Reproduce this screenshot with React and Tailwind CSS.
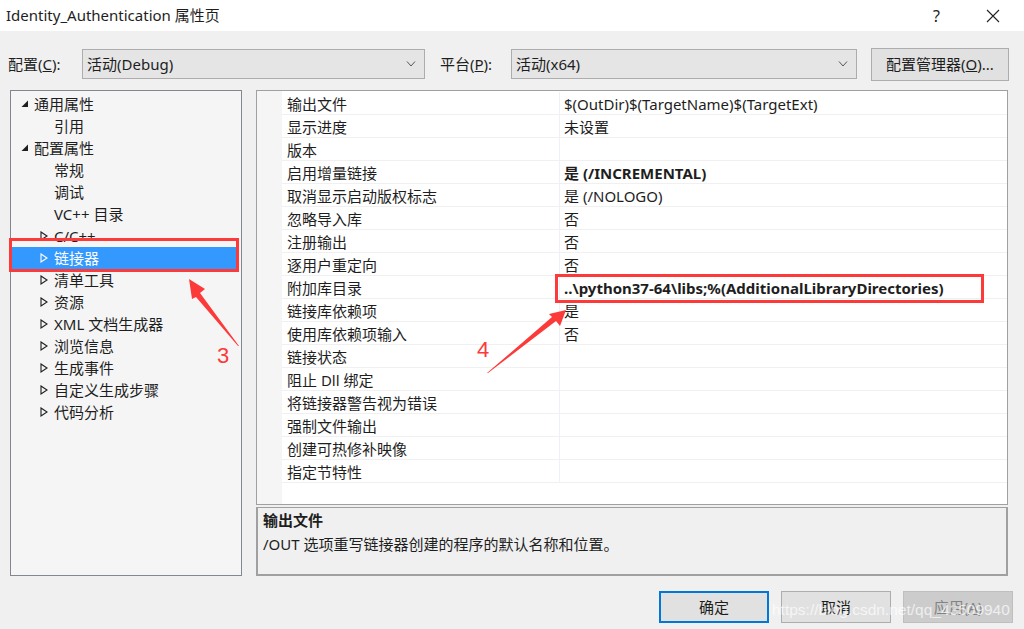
import React from 'react';

const FONT = { fontFamily: '"Noto Sans", "Noto Sans CJK SC", sans-serif' };

const treeItems = [
  { label: '通用属性', level: 1, icon: 'open' },
  { label: '引用', level: 2 },
  { label: '配置属性', level: 1, icon: 'open' },
  { label: '常规', level: 2 },
  { label: '调试', level: 2 },
  { label: 'VC++ 目录', level: 2 },
  { label: 'C/C++', level: 2, icon: 'closed' },
  { label: '链接器', level: 2, icon: 'closed', selected: true },
  { label: '清单工具', level: 2, icon: 'closed' },
  { label: '资源', level: 2, icon: 'closed' },
  { label: 'XML 文档生成器', level: 2, icon: 'closed' },
  { label: '浏览信息', level: 2, icon: 'closed' },
  { label: '生成事件', level: 2, icon: 'closed' },
  { label: '自定义生成步骤', level: 2, icon: 'closed' },
  { label: '代码分析', level: 2, icon: 'closed' },
];

const props = [
  ['输出文件', '$(OutDir)$(TargetName)$(TargetExt)'],
  ['显示进度', '未设置'],
  ['版本', ''],
  ['启用增量链接', '是 (/INCREMENTAL)', true],
  ['取消显示启动版权标志', '是 (/NOLOGO)'],
  ['忽略导入库', '否'],
  ['注册输出', '否'],
  ['逐用户重定向', '否'],
  ['附加库目录', '..\\python37-64\\libs;%(AdditionalLibraryDirectories)', true],
  ['链接库依赖项', '是'],
  ['使用库依赖项输入', '否'],
  ['链接状态', ''],
  ['阻止 Dll 绑定', ''],
  ['将链接器警告视为错误', ''],
  ['强制文件输出', ''],
  ['创建可热修补映像', ''],
  ['指定节特性', ''],
];

function Chevron() {
  return (
    <svg width="10" height="6" viewBox="0 0 10 6">
      <polyline points="1,0.5 5,5 9,0.5" fill="none" stroke="#555" strokeWidth="1" />
    </svg>
  );
}

function Select({ value, width }) {
  return (
    <div className={`h-[30px] ${width} flex items-center justify-between border border-[#adadad] bg-[#e5e5e5] pl-[4px] pr-[8px]`}>
      <span className="text-[15px] text-[#1e1e1e]">{value}</span>
      <Chevron />
    </div>
  );
}

function TreeIcon({ type, selected }) {
  if (type === 'open') {
    return (
      <svg width="8" height="8" viewBox="0 0 8 8">
        <polygon points="7,0.5 7,7 0.5,7" fill="#1e1e1e" />
      </svg>
    );
  }
  if (type === 'closed') {
    return (
      <svg width="8" height="10" viewBox="0 0 8 10">
        <polygon points="1,1 7,5 1,9" fill="none" stroke={selected ? '#fff' : '#1e1e1e'} strokeWidth="1.1" />
      </svg>
    );
  }
  return null;
}

export default function App() {
  return (
    <div className="relative w-[1024px] h-[629px] bg-[#f0f0f0] overflow-hidden text-[#1e1e1e]" style={FONT}>
      {/* title bar */}
      <div className="h-[31px] bg-white flex items-center justify-between pl-[6px] pr-[24px]">
        <span className="text-[15px]">Identity_Authentication 属性页</span>
        <div className="flex items-center gap-[46px] text-[16px] text-[#222]">
          <span>?</span>
          <svg width="14" height="14" viewBox="0 0 14 14">
            <path d="M1 1 L13 13 M13 1 L1 13" stroke="#222" strokeWidth="1.1" />
          </svg>
        </div>
      </div>

      {/* config row */}
      <div className="flex items-center h-[30px] mt-[18px] pl-[8px]">
        <span className="text-[15px] w-[74px]">配置(<u>C</u>):</span>
        <Select value="活动(Debug)" width="w-[343px]" />
        <span className="text-[15px] ml-[15px] w-[71px]">平台(<u>P</u>):</span>
        <Select value="活动(x64)" width="w-[346px]" />
        <div className="ml-[14px] h-[33px] w-[138px] flex items-center justify-center border border-[#adadad] bg-[#e1e1e1] text-[15px]">
          配置管理器(<u>O</u>)...
        </div>
      </div>

      {/* main */}
      <div className="flex mt-[11px] pl-[10px] h-[486px]">
        {/* tree */}
        <div className="w-[232px] h-full border border-[#828790] bg-[#f5f5f5] pt-[2px]">
          {treeItems.map((it) => (
            <div
              key={it.label}
              className={`h-[22px] flex items-center text-[15px] ${it.selected ? 'bg-[#3399ff] text-white mr-[3px]' : ''}`}
            >
              <div className={`flex items-center justify-center ${it.level === 1 ? 'w-[22px] pl-[5px]' : 'w-[42px] pl-[24px]'}`}>
                <TreeIcon type={it.icon} selected={it.selected} />
              </div>
              <span className="pl-[1px]">{it.label}</span>
            </div>
          ))}
        </div>

        {/* right */}
        <div className="ml-[14px] w-[752px] flex flex-col">
          <div className="h-[415px] border border-[#a0a0a0] bg-white flex">
            <div className="w-[25px] bg-[#f5f5f5]" />
            <div className="flex-1 pt-[1px]">
              {props.map(([name, value, bold]) => (
                <div key={name} className="h-[23px] flex border-b border-[#f0f0f0]">
                  <div className="w-[278px] pl-[5px] pt-[2px] flex items-center text-[15px] border-r border-[#eef1f5]">{name}</div>
                  <div className={`flex-1 pl-[4px] pt-[2px] flex items-center text-[15px] ${bold ? 'font-bold' : ''}`}>{value}</div>
                </div>
              ))}
            </div>
          </div>
          <div className="mt-[2px] h-[69px] border-2 border-[#a0a0a0] border-t-[1px] bg-[#f0f0f0] px-[5px] pt-[1px]">
            <div className="text-[15px] font-bold leading-[22px]">输出文件</div>
            <div className="text-[15px] leading-[26px]">/OUT 选项重写链接器创建的程序的默认名称和位置。</div>
          </div>
        </div>
      </div>

      {/* buttons */}
      <div className="flex justify-end mt-[15px] pr-[11px] gap-[12px]">
        <div className="w-[110px] h-[32px] flex items-center justify-center border-2 border-[#0078d7] bg-[#e1e1e1] text-[15px]">确定</div>
        <div className="w-[110px] h-[32px] flex items-center justify-center border border-[#adadad] bg-[#e1e1e1] text-[15px]">取消</div>
        <div className="w-[110px] h-[32px] flex items-center justify-center border border-[#bfbfbf] bg-[#cccccc] text-[15px] text-[#838383]">应用(<u>A</u>)</div>
      </div>

      {/* annotations */}
      <div className="absolute left-[9px] top-[238px] w-[230px] h-[34px] border-[3px] border-[#fc3a3a]" />
      <div className="absolute left-[555px] top-[274px] w-[429px] h-[29px] border-[3px] border-[#fc3a3a]" />
      <svg className="absolute left-0 top-0 pointer-events-none" width="1024" height="629" viewBox="0 0 1024 629">
        <polygon points="189,279 205,289 200,293 239,346 238,346 196,297 192,299" fill="#fc3a3a" />
        <polygon points="566,310 560,326 556,321 488,373 487,373 552,317 549,314" fill="#fc3a3a" />
      </svg>
      <span className="absolute left-[217px] top-[339px] text-[22px] text-[#fc3a3a]" style={{ fontFamily: '"Liberation Sans", sans-serif' }}>3</span>
      <span className="absolute left-[477px] top-[333px] text-[22px] text-[#fc3a3a]" style={{ fontFamily: '"Liberation Sans", sans-serif' }}>4</span>
      <span className="absolute left-[772px] top-[598px] text-[15.5px] text-white/70 whitespace-nowrap" style={{ fontFamily: '"Liberation Sans", sans-serif' }}>https://blog.csdn.net/qq_43509940</span>
    </div>
  );
}
